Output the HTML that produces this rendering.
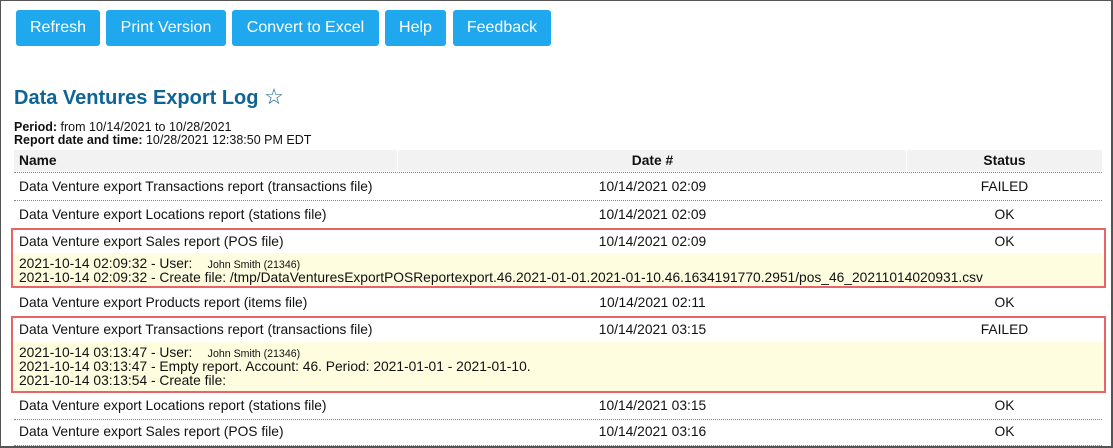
<!DOCTYPE html>
<html><head><meta charset="utf-8"><style>
*{margin:0;padding:0;box-sizing:border-box}
body{width:1113px;height:448px;overflow:hidden;background:#fff;font-family:"Liberation Sans",Arial,sans-serif;color:#111;position:relative}
.frame{position:absolute;left:0;top:0;width:1113px;height:448px;border:1px solid #555;border-right-width:2px;border-bottom-width:2px;pointer-events:none}
.btn{position:absolute;top:10px;height:36px;background:#1fa8ee;color:#fff;font-size:16px;line-height:36px;text-align:center;border-radius:3px}
.t{position:absolute;font-size:13.8px;white-space:nowrap;line-height:15px}
.c1{left:19px}.c2{left:398px;width:509px;text-align:center}.c3{left:907px;width:195px;text-align:center}
.dot{position:absolute;left:14px;width:1088px;border-top:1px dotted #888}
.yel{position:absolute;left:13px;width:1090px;background:#fefde0}
.box{position:absolute;left:11px;width:1095px;border:2px solid #e86468}
.small{font-size:10.6px}
</style></head><body>
<div class="btn" style="left:16px;width:84px">Refresh</div>
<div class="btn" style="left:106px;width:120px">Print Version</div>
<div class="btn" style="left:232px;width:147px">Convert to Excel</div>
<div class="btn" style="left:385px;width:61px">Help</div>
<div class="btn" style="left:453px;width:98px">Feedback</div>

<div style="position:absolute;left:14px;top:84px;font-size:20px;font-weight:bold;color:#0f6496;white-space:nowrap">Data Ventures Export Log <span style="font-weight:normal;font-size:22px">☆</span></div>
<div class="t" style="left:14px;top:121px;font-size:12.5px;line-height:13px"><b>Period:</b> from 10/14/2021 to 10/28/2021</div>
<div class="t" style="left:14px;top:134px;font-size:12.5px;line-height:13px"><b>Report date and time:</b> 10/28/2021 12:38:50 PM EDT</div>

<div style="position:absolute;left:14px;top:150px;width:383px;height:21px;background:#f2f2f2"></div>
<div style="position:absolute;left:398px;top:150px;width:508px;height:21px;background:#f2f2f2"></div>
<div style="position:absolute;left:907px;top:150px;width:195px;height:21px;background:#f2f2f2"></div>
<div class="t c1" style="top:153px;font-weight:bold">Name</div>
<div class="t c2" style="top:153px;font-weight:bold">Date #</div>
<div class="t c3" style="top:153px;font-weight:bold">Status</div>
<div class="dot" style="top:172px"></div>

<div class="t c1" style="top:179px">Data Venture export Transactions report (transactions file)</div>
<div class="t c2" style="top:179px">10/14/2021 02:09</div>
<div class="t c3" style="top:179px">FAILED</div>
<div class="dot" style="top:200px"></div>

<div class="t c1" style="top:207px">Data Venture export Locations report (stations file)</div>
<div class="t c2" style="top:207px">10/14/2021 02:09</div>
<div class="t c3" style="top:207px">OK</div>

<div class="yel" style="top:253px;height:33px"></div>
<div class="box" style="top:228px;height:60px"></div>
<div class="t c1" style="top:234px">Data Venture export Sales report (POS file)</div>
<div class="t c2" style="top:234px">10/14/2021 02:09</div>
<div class="t c3" style="top:234px">OK</div>
<div class="t c1" style="top:256px">2021-10-14 02:09:32 - User: &nbsp;&nbsp;&nbsp;<span class="small">John Smith (21346)</span></div>
<div class="t c1" style="top:270px">2021-10-14 02:09:32 - Create file: /tmp/DataVenturesExportPOSReportexport.46.2021-01-01.2021-01-10.46.1634191770.2951/pos_46_20211014020931.csv</div>

<div class="t c1" style="top:295px">Data Venture export Products report (items file)</div>
<div class="t c2" style="top:295px">10/14/2021 02:11</div>
<div class="t c3" style="top:295px">OK</div>

<div class="yel" style="top:342px;height:49px"></div>
<div class="box" style="top:316px;height:77px"></div>
<div class="t c1" style="top:322px">Data Venture export Transactions report (transactions file)</div>
<div class="t c2" style="top:322px">10/14/2021 03:15</div>
<div class="t c3" style="top:322px">FAILED</div>
<div class="t c1" style="top:345px">2021-10-14 03:13:47 - User: &nbsp;&nbsp;&nbsp;<span class="small">John Smith (21346)</span></div>
<div class="t c1" style="top:359px">2021-10-14 03:13:47 - Empty report. Account: 46. Period: 2021-01-01 - 2021-01-10.</div>
<div class="t c1" style="top:373px">2021-10-14 03:13:54 - Create file:</div>

<div class="t c1" style="top:398px">Data Venture export Locations report (stations file)</div>
<div class="t c2" style="top:398px">10/14/2021 03:15</div>
<div class="t c3" style="top:398px">OK</div>
<div class="dot" style="top:419px"></div>
<div class="t c1" style="top:424px">Data Venture export Sales report (POS file)</div>
<div class="t c2" style="top:424px">10/14/2021 03:16</div>
<div class="t c3" style="top:424px">OK</div>
<div class="dot" style="top:445px"></div>
<div class="frame"></div>
</body></html>
